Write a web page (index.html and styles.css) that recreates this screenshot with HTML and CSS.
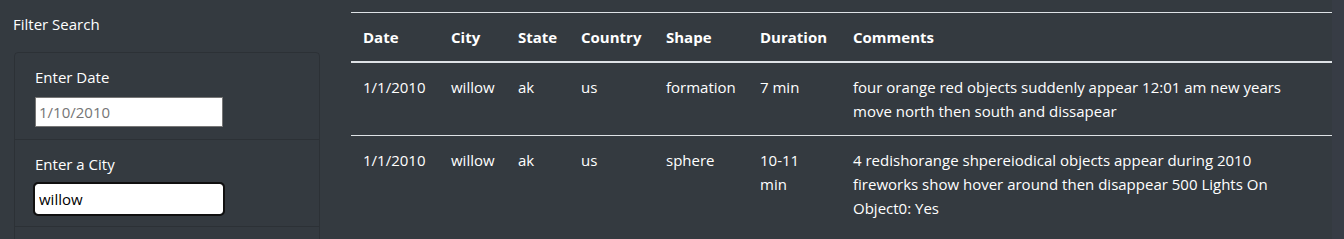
FILE: index.html
```html
<!DOCTYPE html>
<html lang="en">
<head>
    <meta charset="UTF-8">
    <meta name="viewport" content="width=device-width, initial-scale=1.0">
    <title>UFO Sightings</title>
    <link rel="stylesheet" href="styles.css">
</head>
<body>
    <div id="page">
        <aside id="filters">
            <div class="filter-title">Filter Search</div>
            <form id="filter-form">
                <ul class="filter-list">
                    <li class="filter">
                        <label for="datetime">Enter Date</label>
                        <input class="form-input" id="datetime" type="text" placeholder="1/10/2010">
                    </li>
                    <li class="filter">
                        <label for="city">Enter a City</label>
                        <input class="form-input focused" id="city" type="text" value="willow">
                    </li>
                    <li class="filter filter-more"></li>
                </ul>
            </form>
        </aside>
        <main id="results">
            <table id="ufo-table">
                <colgroup>
                    <col style="width: 88px">
                    <col style="width: 67px">
                    <col style="width: 63px">
                    <col style="width: 85px">
                    <col style="width: 94px">
                    <col style="width: 93px">
                    <col>
                </colgroup>
                <thead>
                    <tr>
                        <th>Date</th>
                        <th>City</th>
                        <th>State</th>
                        <th>Country</th>
                        <th>Shape</th>
                        <th>Duration</th>
                        <th>Comments</th>
                    </tr>
                </thead>
                <tbody>
                    <tr>
                        <td>1/1/2010</td>
                        <td>willow</td>
                        <td>ak</td>
                        <td>us</td>
                        <td>formation</td>
                        <td>7 min</td>
                        <td>four orange red objects suddenly appear 12:01 am new years move north then south and dissapear</td>
                    </tr>
                    <tr>
                        <td>1/1/2010</td>
                        <td>willow</td>
                        <td>ak</td>
                        <td>us</td>
                        <td>sphere</td>
                        <td>10-11 min</td>
                        <td>4 redishorange shpereiodical objects appear during 2010 fireworks show hover around then disappear 500 Lights On Object0: Yes</td>
                    </tr>
                </tbody>
            </table>
        </main>
    </div>
</body>
</html>
```

FILE: styles.css
```css
body {
    margin: 0;
    background: #373c45;
    color: #fff;
    font-family: "Open Sans", "Noto Sans", sans-serif;
    font-size: 15px;
    line-height: 24px;
}
#page {
    display: flex;
    margin-right: 12px;
    height: 239px;
    overflow: hidden;
    background: #343a40;
}
#filters {
    width: 306px;
    margin-left: 14px;
    flex-shrink: 0;
}
.filter-title {
    margin: 12px 0 16px -1px;
    font-size: 15px;
}
.filter-list {
    list-style: none;
    margin: 0;
    padding: 0;
    border: 1px solid rgba(0, 0, 0, 0.15);
    border-radius: 4px;
}
.filter {
    padding: 12px 20px;
    border-bottom: 1px solid rgba(0, 0, 0, 0.15);
}
.filter-more {
    height: 60px;
}
.filter label {
    display: block;
    margin-bottom: 8px;
}
.form-input {
    display: block;
    box-sizing: border-box;
    width: 188px;
    height: 30px;
    margin: 0;
    padding: 1px 3px;
    border: 1px solid #767676;
    background: #fff;
    color: #000;
    font-family: "Open Sans", "Noto Sans", sans-serif;
    font-size: 15px;
}
.form-input::placeholder {
    color: #757575;
}
.form-input.focused {
    border-color: #fff;
    border-radius: 3px;
    outline: 2px solid #101010;
    outline-offset: 0;
}
#results {
    flex: 1;
    padding-left: 31px;
    padding-top: 12px;
}
#ufo-table {
    width: 100%;
    table-layout: fixed;
    border-collapse: collapse;
}
#ufo-table th,
#ufo-table td {
    padding: 12px;
    text-align: left;
    vertical-align: top;
    border-top: 1px solid #dee2e6;
}
#ufo-table th {
    font-weight: 700;
    border-bottom: 2px solid #dee2e6;
}
```
